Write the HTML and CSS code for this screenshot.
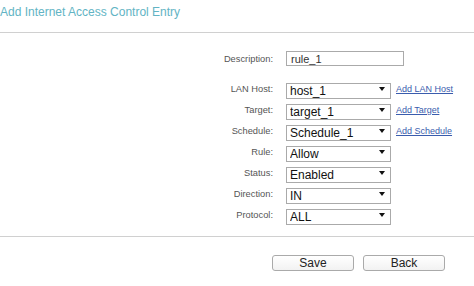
FILE: index.html
```html
<!DOCTYPE html>
<html lang="en">
<head>
    <meta charset="UTF-8">
    <title>Add Internet Access Control Entry</title>
    <link rel="stylesheet" href="styles.css">
</head>
<body>
    <h2 class="title">Add Internet Access Control Entry</h2>

    <form class="entry-form" id="entry-form">
        <label class="label" for="desc">Description:</label>
        <input class="text-input" type="text" id="desc" value="rule_1">

        <label class="label first" for="host">LAN Host:</label>
        <span class="select-wrap first">
            <select id="host"><option>host_1</option></select>
        </span>
        <a class="link first" href="#">Add LAN Host</a>

        <label class="label" for="target">Target:</label>
        <span class="select-wrap">
            <select id="target"><option>target_1</option></select>
        </span>
        <a class="link" href="#">Add Target</a>

        <label class="label" for="schedule">Schedule:</label>
        <span class="select-wrap">
            <select id="schedule"><option>Schedule_1</option></select>
        </span>
        <a class="link" href="#">Add Schedule</a>

        <label class="label" for="rule">Rule:</label>
        <span class="select-wrap">
            <select id="rule"><option>Allow</option><option>Deny</option></select>
        </span>
        <span></span>

        <label class="label" for="status">Status:</label>
        <span class="select-wrap">
            <select id="status"><option>Enabled</option><option>Disabled</option></select>
        </span>
        <span></span>

        <label class="label" for="direction">Direction:</label>
        <span class="select-wrap">
            <select id="direction"><option>IN</option><option>OUT</option></select>
        </span>
        <span></span>

        <label class="label" for="protocol">Protocol:</label>
        <span class="select-wrap">
            <select id="protocol"><option>ALL</option><option>TCP</option><option>UDP</option></select>
        </span>
        <span></span>
    </form>

    <div class="actions">
        <button type="button">Save</button>
        <button type="button">Back</button>
    </div>
</body>
</html>
```

FILE: styles.css
```css
body {
    margin: 0;
    font-family: "Liberation Sans", Arial, sans-serif;
    background: #fff;
    color: #333;
}

.title {
    margin: 0;
    height: 33px;
    padding-top: 5px;
    box-sizing: border-box;
    border-bottom: 1px solid #d0d0d0;
    font-size: 12px;
    font-weight: normal;
    color: #62b4c4;
    line-height: 14px;
}

.entry-form {
    display: grid;
    grid-template-columns: 273px 105px 1fr;
    row-gap: 5px;
    align-items: center;
    margin-top: 18px;
    padding-bottom: 13px;
    border-bottom: 1px solid #d0d0d0;
}

.label {
    grid-column: 1;
    text-align: right;
    font-size: 9.3px;
    color: #555;
}

.first {
    margin-top: 10px;
}

.text-input {
    grid-column: 2 / 4;
    width: 118px;
    height: 15px;
    box-sizing: border-box;
    margin-left: 13px;
    padding: 0 4px;
    border: 1px solid #aaa;
    font-family: inherit;
    font-size: 11px;
    color: #333;
}

.select-wrap {
    position: relative;
    margin-left: 13px;
    display: block;
    width: 105px;
    height: 16px;
}

.select-wrap select {
    appearance: none;
    width: 105px;
    height: 16px;
    box-sizing: border-box;
    margin: 0;
    padding: 0 0 0 3px;
    border: 1px solid #aaa;
    border-radius: 0;
    background: #fff;
    font-family: inherit;
    font-size: 12px;
    color: #111;
    line-height: 14px;
}

.select-wrap::after {
    content: "";
    position: absolute;
    right: 6px;
    top: 6px;
    border-left: 3px solid transparent;
    border-right: 3px solid transparent;
    border-top: 4px solid #111;
    pointer-events: none;
}

.link {
    margin-left: 18px;
    font-size: 9px;
    color: #3a5cad;
}

.actions {
    display: flex;
    gap: 9px;
    padding-left: 272px;
    margin-top: 18px;
}

.actions button {
    width: 82px;
    height: 16px;
    padding: 0;
    border: 1px solid #aaa;
    border-radius: 3px;
    background: linear-gradient(#fff, #f2f2f2);
    font-family: inherit;
    font-size: 12px;
    color: #222;
    cursor: pointer;
}
```
